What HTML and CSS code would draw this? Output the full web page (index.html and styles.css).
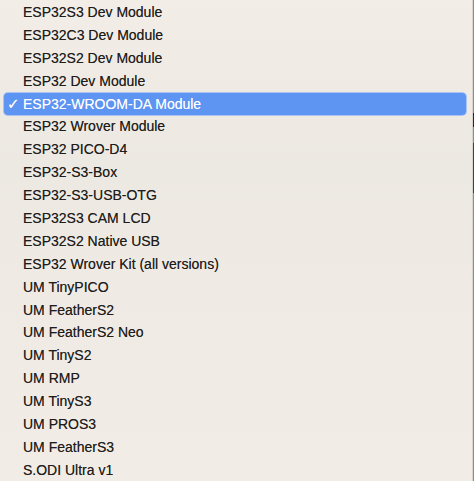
FILE: index.html
```html
<!DOCTYPE html>
<html>
<head>
<meta charset="utf-8">
<link rel="stylesheet" href="styles.css">
</head>
<body>
<div class="screen">
  <ul class="menu">
    <li class="item">ESP32S3 Dev Module</li>
    <li class="item">ESP32C3 Dev Module</li>
    <li class="item">ESP32S2 Dev Module</li>
    <li class="item">ESP32 Dev Module</li>
    <li class="item selected"><span class="check">✓</span>ESP32-WROOM-DA Module</li>
    <li class="item">ESP32 Wrover Module</li>
    <li class="item">ESP32 PICO-D4</li>
    <li class="item">ESP32-S3-Box</li>
    <li class="item">ESP32-S3-USB-OTG</li>
    <li class="item">ESP32S3 CAM LCD</li>
    <li class="item">ESP32S2 Native USB</li>
    <li class="item">ESP32 Wrover Kit (all versions)</li>
    <li class="item">UM TinyPICO</li>
    <li class="item">UM FeatherS2</li>
    <li class="item">UM FeatherS2 Neo</li>
    <li class="item">UM TinyS2</li>
    <li class="item">UM RMP</li>
    <li class="item">UM TinyS3</li>
    <li class="item">UM PROS3</li>
    <li class="item">UM FeatherS3</li>
    <li class="item">S.ODI Ultra v1</li>
  </ul>
  <div class="edge">
    <div class="edge-dark"></div>
    <div class="edge-teal"></div>
  </div>
</div>
</body>
</html>
```
FILE: styles.css
```css
html, body {
  margin: 0;
  padding: 0;
  width: 474px;
  height: 481px;
  overflow: hidden;
}
.screen {
  display: flex;
  width: 474px;
  height: 481px;
}
.menu {
  list-style: none;
  margin: 0;
  padding: 1px 6px 0 4px;
  width: 462px;
  height: 481px;
  background: linear-gradient(180deg, #f2ede6 0%, #ece9e2 35%, #efeae4 60%, #f2ece6 100%);
  font-family: "Liberation Sans", Arial, sans-serif;
  font-size: 14px;
  color: #1f1d1b;
  border-right: 1px solid #d8d3cc;
}
.item {
  height: 22.9px;
  line-height: 22.9px;
  padding-left: 19px;
  border-radius: 4px;
  white-space: nowrap;
  position: relative;
  text-shadow: 0 0 0.4px rgba(31, 29, 27, 0.6);
}
.item.selected {
  background: #5f95f2;
  color: #ffffff;
  box-shadow: 0 0 0 1px #a9c4f3;
  text-shadow: 0 0 0.4px rgba(255, 255, 255, 0.6);
}
.check {
  position: absolute;
  left: 3px;
  top: 0;
  font-family: "DejaVu Sans", sans-serif;
  font-size: 15px;
  font-weight: bold;
}
.edge {
  flex: 1;
  background: #8f8c89;
  display: flex;
  flex-direction: column;
}
.edge-dark {
  margin-top: 113px;
  height: 14px;
  background: #262626;
}
.edge-teal {
  margin-top: 16px;
  height: 50px;
  background: #2e4a48;
}
```
